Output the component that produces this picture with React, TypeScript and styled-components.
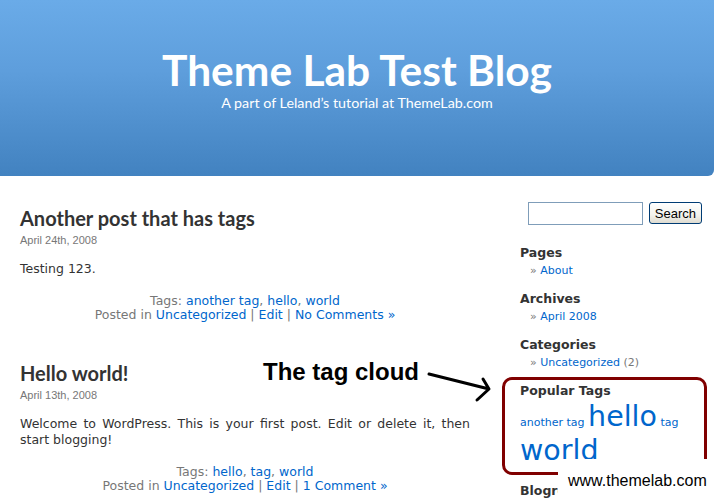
import React from 'react';
import styled, { createGlobalStyle } from 'styled-components';

const GlobalStyle = createGlobalStyle`
  html, body {
    margin: 0;
    padding: 0;
    background: #fff;
  }
  body {
    width: 720px;
    height: 500px;
    overflow: hidden;
    font-family: "DejaVu Sans", Verdana, sans-serif;
  }
`;

const Page = styled.div`
  position: relative;
  width: 720px;
  height: 500px;
  overflow: hidden;
  background: #fff;
`;

const Header = styled.header`
  width: 714px;
  height: 176px;
  box-sizing: border-box;
  padding-top: 48px;
  background: linear-gradient(to bottom, #6aabe8 0%, #5e9edc 40%, #4282c0 100%);
  border-bottom-right-radius: 6px;
  text-align: center;
  color: #fff;
`;

const BlogTitle = styled.h1`
  margin: 0;
  font-family: Lato, "Open Sans", sans-serif;
  font-weight: 700;
  font-size: 42.5px;
  line-height: 44px;
`;

const Tagline = styled.p`
  margin: 3px 0 0;
  font-family: Lato, "Open Sans", sans-serif;
  font-size: 14.3px;
  line-height: 16px;
`;

const Columns = styled.div`
  display: flex;
  gap: 50px;
  padding-left: 20px;
`;

const Main = styled.main`
  width: 450px;
  padding-top: 32px;
`;

const Post = styled.article`
  margin-bottom: 41px;
`;

const PostTitle = styled.h2`
  margin: 0;
  font-family: Lato, "Open Sans", sans-serif;
  font-weight: 700;
  font-size: 20px;
  line-height: 20px;
  color: #333;
`;

const PostDate = styled.div`
  margin-top: 5px;
  font-family: "Liberation Sans", Arial, sans-serif;
  font-size: 11px;
  line-height: 14px;
  color: #777;
`;

const PostText = styled.p`
  margin: 14px 0 17px;
  font-size: 12.5px;
  line-height: 16px;
  color: #333;
  text-align: justify;
`;

const PostMeta = styled.div`
  font-size: 12.5px;
  line-height: 14px;
  color: #777;
  text-align: center;
`;

const Link = styled.a`
  color: #0066cc;
  text-decoration: none;
`;

const Sidebar = styled.aside`
  width: 184px;
  padding-top: 26px;
`;

const SearchForm = styled.form`
  display: flex;
  justify-content: flex-end;
  gap: 6px;
  padding-right: 2px;
  margin-bottom: 20px;
`;

const SearchInput = styled.input`
  width: 115px;
  height: 23px;
  box-sizing: border-box;
  border: 1px solid #7f9db9;
  padding: 0 3px;
`;

const SearchButton = styled.button`
  height: 22px;
  padding: 0 5px;
  border: 1px solid #003c74;
  border-radius: 3px;
  background: linear-gradient(to bottom, #ffffff 0%, #f3f2ec 60%, #dedbd0 100%);
  font-family: "Liberation Sans", Arial, sans-serif;
  font-size: 13px;
  color: #000;
`;

const Widget = styled.section`
  margin-bottom: 12px;
`;

const WidgetTitle = styled.h3`
  margin: 0;
  font-size: 12.5px;
  line-height: 16px;
  font-weight: 700;
  color: #333;
`;

const WidgetList = styled.ul`
  list-style: none;
  margin: 2px 0 0;
  padding: 0 0 0 10px;
`;

const WidgetItem = styled.li`
  font-size: 11px;
  line-height: 16px;
  color: #777;
  &::before {
    content: '» ';
    color: #777;
  }
`;

const Cloud = styled.div`
  margin-top: 4px;
  font-size: 11px;
  line-height: 28px;
`;

const CloudTag = styled.a<{ $size: number }>`
  color: #0066cc;
  text-decoration: none;
  font-size: ${(p) => p.$size}px;
  line-height: 1;
`;

const Callout = styled.div`
  position: absolute;
  left: 263px;
  top: 358px;
  font-family: "Liberation Sans", Arial, sans-serif;
  font-weight: 700;
  font-size: 24px;
  line-height: 28px;
  color: #000;
`;

const Arrow = styled.svg`
  position: absolute;
  left: 420px;
  top: 365px;
`;

const Highlight = styled.div`
  position: absolute;
  left: 502px;
  top: 377px;
  width: 205px;
  height: 98px;
  box-sizing: border-box;
  border: 3px solid #800000;
  border-radius: 10px;
`;

const Watermark = styled.div`
  position: absolute;
  left: 558px;
  top: 459px;
  width: 162px;
  height: 41px;
  background: #fff;
  box-sizing: border-box;
  padding: 12px 0 0 10px;
  font-family: "Liberation Sans", Arial, sans-serif;
  font-size: 16px;
  line-height: 20px;
  color: #000;
`;

export default function App() {
  return (
    <Page>
      <GlobalStyle />
      <Header>
        <BlogTitle>Theme Lab Test Blog</BlogTitle>
        <Tagline>A part of Leland’s tutorial at ThemeLab.com</Tagline>
      </Header>
      <Columns>
        <Main>
          <Post>
            <PostTitle>Another post that has tags</PostTitle>
            <PostDate>April 24th, 2008</PostDate>
            <PostText>Testing 123.</PostText>
            <PostMeta>
              Tags: <Link href="#">another tag</Link>, <Link href="#">hello</Link>,{' '}
              <Link href="#">world</Link>
              <br />
              Posted in <Link href="#">Uncategorized</Link> | <Link href="#">Edit</Link> |{' '}
              <Link href="#">No Comments »</Link>
            </PostMeta>
          </Post>
          <Post>
            <PostTitle>Hello world!</PostTitle>
            <PostDate>April 13th, 2008</PostDate>
            <PostText>
              Welcome to WordPress. This is your first post. Edit or delete it, then start blogging!
            </PostText>
            <PostMeta>
              Tags: <Link href="#">hello</Link>, <Link href="#">tag</Link>, <Link href="#">world</Link>
              <br />
              Posted in <Link href="#">Uncategorized</Link> | <Link href="#">Edit</Link> |{' '}
              <Link href="#">1 Comment »</Link>
            </PostMeta>
          </Post>
        </Main>
        <Sidebar>
          <SearchForm onSubmit={(e) => e.preventDefault()}>
            <SearchInput type="text" />
            <SearchButton type="submit">Search</SearchButton>
          </SearchForm>
          <Widget>
            <WidgetTitle>Pages</WidgetTitle>
            <WidgetList>
              <WidgetItem>
                <Link href="#">About</Link>
              </WidgetItem>
            </WidgetList>
          </Widget>
          <Widget>
            <WidgetTitle>Archives</WidgetTitle>
            <WidgetList>
              <WidgetItem>
                <Link href="#">April 2008</Link>
              </WidgetItem>
            </WidgetList>
          </Widget>
          <Widget>
            <WidgetTitle>Categories</WidgetTitle>
            <WidgetList>
              <WidgetItem>
                <Link href="#">Uncategorized</Link> (2)
              </WidgetItem>
            </WidgetList>
          </Widget>
          <Widget>
            <WidgetTitle>Popular Tags</WidgetTitle>
            <Cloud>
              <CloudTag href="#" $size={11}>another tag</CloudTag>{' '}
              <CloudTag href="#" $size={28.5}>hello</CloudTag>{' '}
              <CloudTag href="#" $size={11}>tag</CloudTag>{' '}
              <CloudTag href="#" $size={28.5}>world</CloudTag>
            </Cloud>
          </Widget>
          <Widget>
            <WidgetTitle>Blogroll</WidgetTitle>
          </Widget>
        </Sidebar>
      </Columns>
      <Callout>The tag cloud</Callout>
      <Arrow width="80" height="40" viewBox="0 0 80 40">
        <path
          d="M9 9 L69 24 M63 14 L69 24 L57 35"
          fill="none"
          stroke="#000"
          strokeWidth="3"
          strokeLinecap="round"
          strokeLinejoin="round"
        />
      </Arrow>
      <Highlight />
      <Watermark>www.themelab.com</Watermark>
    </Page>
  );
}
